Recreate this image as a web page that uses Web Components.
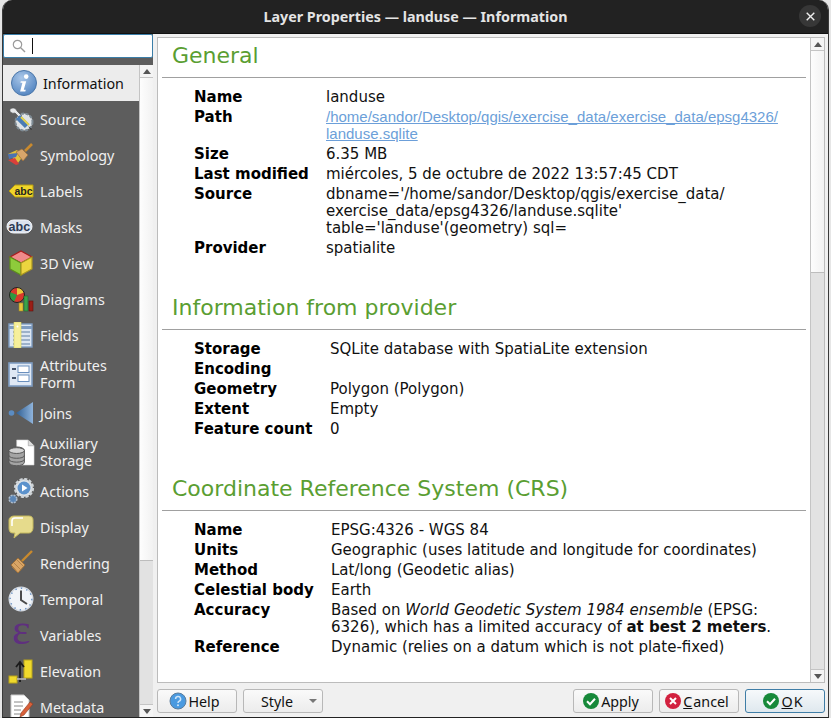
<!DOCTYPE html>
<html><head><meta charset="utf-8"><style>
html,body{margin:0;padding:0;height:718px;overflow:hidden;background:#e6e6e6}
</style></head><body>
<qgis-dialog>
  <title-bar slot="title">Layer Properties — landuse — Information</title-bar>
  <search-box slot="search"></search-box>
  <nav-list slot="nav">
    <nav-item selected><svg slot="icon" width="28" height="28" viewBox="0 0 28 28"><defs><radialGradient id="ib" cx=".4" cy=".3" r=".8"><stop offset="0" stop-color="#a9c6e8"/><stop offset="1" stop-color="#4b7fbd"/></radialGradient></defs><circle cx="14" cy="14" r="12.5" fill="url(#ib)" stroke="#4a76a8"/><circle cx="16.2" cy="7.6" r="2.3" fill="#fff"/><path d="M10.8 12.2h5.4l-2.4 8.6h2l-.5 1.6h-5.2l2.3-8.6h-2z" fill="#fff"/></svg>Information</nav-item>
    <nav-item><svg slot="icon" width="26" height="26" viewBox="0 0 26 26"><circle cx="16" cy="16" r="8.5" fill="#dfe3e6" stroke="#7d8a93" stroke-width="2" stroke-dasharray="3 1.6"/><path d="M2 3c3-2 6-1 7 2l5 5-2 2-5-5C4 8 1 6 2 3z" fill="#e6e8ea" stroke="#555" stroke-width=".7"/><path d="M10 11l9 9" stroke="#4a7cb5" stroke-width="6"/><path d="M13 11l8 8" stroke="#e7d44d" stroke-width="2"/><path d="M20 20l4 3-1 1z" fill="#333"/></svg>Source</nav-item>
    <nav-item><svg slot="icon" width="26" height="26" viewBox="0 0 26 26"><path d="M0 12l9-4 6 6-5 7z" fill="#e2c13a"/><path d="M0 12l10-1-2 4-7 2z" fill="#4c72b0"/><path d="M0 18l7-2 4 6-3 1z" fill="#d9403a"/><path d="M8 10l6-3 6 6-5 6z" fill="#d8a66b" stroke="#9a6d3a" stroke-width=".7"/><path d="M17 9l7-7" stroke="#c98a2e" stroke-width="2.6"/></svg>Symbology</nav-item>
    <nav-item><svg slot="icon" width="26" height="26" viewBox="0 0 26 26"><path d="M1 13l6-6h18v12H7z" fill="#f1d52a" stroke="#b59c12"/><text x="6.5" y="17.2" font-family="Liberation Sans" font-weight="700" font-size="10.5" fill="#222">abc</text></svg>Labels</nav-item>
    <nav-item><svg slot="icon" width="28" height="26" viewBox="0 0 28 26" style="margin-left:-2px"><rect x="1" y="6" width="25" height="13" rx="6.5" fill="#dce3ef" stroke="#f4f6fa"/><text x="2.6" y="17" font-family="Liberation Sans" font-weight="700" font-size="12.5" fill="#2d3a55">abc</text></svg>Masks</nav-item>
    <nav-item><svg slot="icon" width="26" height="26" viewBox="0 0 26 26"><path d="M13 1l11 6-11 6L2 7z" fill="#f08a8a" stroke="#a81c1c" stroke-width="1.2"/><path d="M2 7l11 6v12L2 19z" fill="#8ecb3b" stroke="#5d8f1b" stroke-width="1.2"/><path d="M24 7L13 13v12l11-6z" fill="#ecd53f" stroke="#a99521" stroke-width="1.2"/></svg>3D View</nav-item>
    <nav-item><svg slot="icon" width="26" height="26" viewBox="0 0 26 26"><circle cx="9" cy="9" r="7.5" fill="#d9392c"/><path d="M9 9V1.5a7.5 7.5 0 0 1 7 5z" fill="#e9c63a"/><path d="M9 9L2 6a7.5 7.5 0 0 0 4 10z" fill="#2f9a41"/><circle cx="9" cy="9" r="7.5" fill="none" stroke="#222"/><rect x="11" y="17" width="4" height="8" fill="#e9c63a" stroke="#9a8420" stroke-width=".6"/><rect x="16" y="10" width="4" height="15" fill="#3aa24a" stroke="#226a30" stroke-width=".6"/><rect x="21" y="15" width="4" height="10" fill="#9a1e16" stroke="#5e120d" stroke-width=".6"/></svg>Diagrams</nav-item>
    <nav-item><svg slot="icon" width="26" height="26" viewBox="0 0 26 26"><rect x="1" y="2" width="23" height="23" fill="#dce6f2" stroke="#7f9dc2" stroke-width="1.4"/><path d="M1 5.5h23" stroke="#7f9dc2" stroke-width="3"/><path d="M5 10h17M5 14h17M5 18h17M5 22h17" stroke="#87a0bd" stroke-width="1.4"/><rect x="6" y="0" width="7" height="26" fill="#f6ef9b" stroke="#dcd25a" stroke-width=".6"/><circle cx="9.5" cy="4.5" r="1" fill="#fff"/></svg>Fields</nav-item>
    <nav-item two><svg slot="icon" width="26" height="26" viewBox="0 0 26 26"><rect x="1" y="2" width="23" height="23" fill="#dfe8f4" stroke="#7f9dc2" stroke-width="1.6"/><path d="M4 8h4M4 17h4" stroke="#44536b" stroke-width="1.8"/><rect x="10" y="5" width="11" height="6.5" fill="#fff" stroke="#6a8fbd"/><rect x="10" y="14" width="11" height="6.5" fill="#fff" stroke="#6a8fbd"/></svg>Attributes<br>Form</nav-item>
    <nav-item><svg slot="icon" width="26" height="26" viewBox="0 0 26 26"><defs><linearGradient id="jg"><stop offset="0" stop-color="#2f5f94"/><stop offset="1" stop-color="#8fb4dc"/></linearGradient></defs><circle cx="3.5" cy="13" r="2.8" fill="#5b8cc2"/><path d="M8 13L25 2v22z" fill="url(#jg)"/></svg>Joins</nav-item>
    <nav-item two><svg slot="icon" width="27" height="27" viewBox="0 0 28 28"><path d="M9 1h12l6 6v20H9z" fill="#fff" stroke="#ccc" stroke-width=".6"/><path d="M21 1v6h6" fill="#ddd" stroke="#999" stroke-width=".6"/><path d="M1 12c0-5 16-5 16 0v12c0 5-16 5-16 0z" fill="#a4a4a4" stroke="#555"/><ellipse cx="9" cy="12" rx="8" ry="3" fill="#d2d2d2" stroke="#555"/><path d="M1 17c0 4 16 4 16 0M1 21c0 4 16 4 16 0" fill="none" stroke="#555"/></svg>Auxiliary<br>Storage</nav-item>
    <nav-item><svg slot="icon" width="26" height="26" viewBox="0 0 26 26"><circle cx="16" cy="10" r="8.8" fill="#e0e4e8" stroke="#cfd4d8" stroke-width="2.6" stroke-dasharray="3 1.6"/><circle cx="16" cy="10" r="6.5" fill="#5c92cc"/><path d="M14 6.5l5.5 3.5-5.5 3.5z" fill="#fff"/><circle cx="5" cy="21" r="3.8" fill="#5b86b6" stroke="#aebccd" stroke-width="1.6" stroke-dasharray="2 1"/></svg>Actions</nav-item>
    <nav-item><svg slot="icon" width="26" height="26" viewBox="0 0 26 26"><path d="M6 2h15c3 0 4 2 4 4v8c0 3-2 5-4 5H12l-6 5 1-5H5c-3 0-4-2-4-5V6c0-2 2-4 5-4z" fill="#e6db8c" stroke="#c5b95f"/><path d="M4 12V7c0-2 1-3 3-3h8" fill="none" stroke="#fff" stroke-width="1.6"/></svg>Display</nav-item>
    <nav-item><svg slot="icon" width="26" height="26" viewBox="0 0 26 26"><path d="M3 15l7-7 7 7-7 8z" fill="#d9a566" stroke="#9d6f38"/><path d="M6 13l7 7M9 10l7 7M4 17l5 5" stroke="#a97a42" stroke-width=".8"/><path d="M14 11l10-10" stroke="#c98a2e" stroke-width="2.4"/></svg>Rendering</nav-item>
    <nav-item><svg slot="icon" width="26" height="26" viewBox="0 0 26 26"><circle cx="13" cy="13" r="11.8" fill="#f1f4f8" stroke="#d5dbe3" stroke-width="1.4"/><circle cx="13" cy="13" r="10.8" fill="none" stroke="#6b93c5" stroke-width="1.4" stroke-dasharray="1.4 4.2"/><path d="M13 4.5V14l6 4" fill="none" stroke="#4b4b4b" stroke-width="2"/></svg>Temporal</nav-item>
    <nav-item><span slot="icon" style="display:block;width:26px;height:26px;padding-left:4px;box-sizing:border-box;font:44px/16px 'Liberation Serif',serif;color:#5f2f7f">ε</span>Variables</nav-item>
    <nav-item><svg slot="icon" width="26" height="26" viewBox="0 0 26 26"><rect x="1" y="18" width="8" height="7" fill="#efd92c" stroke="#b9a41a"/><rect x="16" y="2" width="8" height="18" fill="#efd92c" stroke="#b9a41a"/><path d="M12 24V5M8 9l4-5 4 5" fill="none" stroke="#1b1b1b" stroke-width="1.8"/><path d="M9 21h9" stroke="#b9b9b9" stroke-width="1.6"/></svg>Elevation</nav-item>
    <nav-item><svg slot="icon" width="26" height="26" viewBox="0 0 26 26"><path d="M3 1h13l5 5v21H3z" fill="#fff" stroke="#ccc"/><path d="M6 8h9M6 12h9M6 16h7M6 20h9" stroke="#888"/><path d="M13 19l9-11 3 2-9 11-4 2z" fill="#d9603a" stroke="#8d3a1f" stroke-width=".6"/></svg>Metadata</nav-item>
  </nav-list>

  <info-section heading="General">
    <info-table first-col="132">
      <b>Name</b><span>landuse</span>
      <b>Path</b><a-link>/home/sandor/Desktop/qgis/exercise_data/exercise_data/epsg4326/<br>landuse.sqlite</a-link>
      <b>Size</b><span>6.35 MB</span>
      <b>Last modified</b><span>miércoles, 5 de octubre de 2022 13:57:45 CDT</span>
      <b>Source</b><span>dbname='/home/sandor/Desktop/qgis/exercise_data/<br>exercise_data/epsg4326/landuse.sqlite'<br>table='landuse'(geometry) sql=</span>
      <b>Provider</b><span>spatialite</span>
    </info-table>
  </info-section>
  <info-section heading="Information from provider">
    <info-table first-col="136">
      <b>Storage</b><span>SQLite database with SpatiaLite extension</span>
      <b>Encoding</b><span></span>
      <b>Geometry</b><span>Polygon (Polygon)</span>
      <b>Extent</b><span>Empty</span>
      <b>Feature count</b><span>0</span>
    </info-table>
  </info-section>
  <info-section heading="Coordinate Reference System (CRS)">
    <info-table first-col="137">
      <b>Name</b><span>EPSG:4326 - WGS 84</span>
      <b>Units</b><span>Geographic (uses latitude and longitude for coordinates)</span>
      <b>Method</b><span>Lat/long (Geodetic alias)</span>
      <b>Celestial body</b><span>Earth</span>
      <b>Accuracy</b><span>Based on <i>World Geodetic System 1984 ensemble</i> (EPSG:<br>6326), which has a limited accuracy of <b>at best 2 meters</b>.</span>
      <b>Reference</b><span>Dynamic (relies on a datum which is not plate-fixed)</span>
    </info-table>
  </info-section>

  <dlg-button slot="left"><svg slot="icon" width="18" height="18" viewBox="0 0 18 18"><circle cx="9" cy="9" r="8" fill="#4a9ae0" stroke="#5a7c9c"/><path d="M6.6 7a2.5 2.5 0 1 1 3.6 2.2c-.9.5-1.2 1-1.2 1.9" fill="none" stroke="#cfe6fa" stroke-width="1.5"/><circle cx="9" cy="13.3" r="1" fill="#cfe6fa"/></svg>Help</dlg-button>
  <dlg-button slot="left" menu>Style</dlg-button>
  <dlg-button slot="right"><svg slot="icon" width="18" height="18" viewBox="0 0 18 18"><circle cx="9" cy="9" r="8" fill="#17893a"/><path d="M5 9.2l3 3 5-5.4" fill="none" stroke="#fff" stroke-width="2"/></svg>Apply</dlg-button>
  <dlg-button slot="right"><svg slot="icon" width="18" height="18" viewBox="0 0 18 18"><circle cx="9" cy="9" r="8" fill="#d2213f"/><path d="M6 6l6 6M12 6l-6 6" stroke="#fff" stroke-width="2"/></svg><u>C</u>ancel</dlg-button>
  <dlg-button slot="right" primary><svg slot="icon" width="18" height="18" viewBox="0 0 18 18"><circle cx="9" cy="9" r="8" fill="#17893a"/><path d="M5 9.2l3 3 5-5.4" fill="none" stroke="#fff" stroke-width="2"/></svg><u>O</u>K</dlg-button>
</qgis-dialog>

<script>
function def(name, css, html, extra){
  class C extends HTMLElement{
    constructor(){super();const r=this.attachShadow({mode:'open'});r.innerHTML='<style>'+css+'</style>'+html;}
    connectedCallback(){if(extra)extra(this);}
  }
  customElements.define(name,C);
}
const UI='"Noto Sans","Open Sans",sans-serif';
def('qgis-dialog',`
:host{display:flex;flex-direction:column;width:825px;height:717px;margin-left:2px;background:#f0f0f0;border-left:1px solid #3a3a3a;border-right:1px solid #3a3a3a;box-sizing:content-box;border-bottom:1px solid #222;font-family:${UI};overflow:hidden;border-radius:10px 10px 0 0}
.body{flex:1;display:flex;min-height:0}
.left{width:150px;display:flex;flex-direction:column;min-height:0}
.split{width:4px}
.right{width:668px;display:flex;flex-direction:column;padding-top:3px;box-sizing:border-box}
.frame{height:646px;box-sizing:border-box;border:1px solid #bcbcbc;display:flex;background:#fff}
.scroll{flex:1;min-width:0;overflow:hidden;padding:4px 4px 0 4px}
.btns{display:flex;justify-content:space-between;margin-top:6px}
.grp{display:flex;gap:6px}
`,`
<slot name="title"></slot>
<div class="body">
  <div class="left"><slot name="search"></slot><slot name="nav"></slot></div>
  <div class="split"></div>
  <div class="right">
    <div class="frame"><div class="scroll"><slot></slot></div><v-scroll thumb="222" w="14"></v-scroll></div>
    <div class="btns"><div class="grp"><slot name="left"></slot></div><div class="grp"><slot name="right"></slot></div></div>
  </div>
</div>`);
def('title-bar',`
:host{display:flex;align-items:center;justify-content:center;position:relative;height:33px;flex:none;background:#222;color:#e4e4e4;font:700 14.3px ${UI};border-bottom:1px solid #111;box-sizing:content-box}
.x{position:absolute;right:7px;top:5px;width:22px;height:22px;border-radius:50%;background:#373737;display:flex;align-items:center;justify-content:center}
`,`<span class="t"><slot></slot></span><span class="x"><svg width="9" height="9" viewBox="0 0 9 9"><path d="M.7.7l7.6 7.6M8.3.7L.7 8.3" stroke="#eee" stroke-width="1.4"/></svg></span>`);
def('search-box',`
:host{display:block;flex:none;background:#5d5d5d;height:31px;box-sizing:border-box}
.i{height:24px;background:#fff;border:1px solid #3b7ea8;border-radius:2px;box-sizing:border-box;display:flex;align-items:center;padding-left:8px;gap:6px}
.c{width:1px;height:16px;background:#111}
`,`<div class="i"><svg width="14" height="14" viewBox="0 0 14 14"><circle cx="5.5" cy="5.5" r="4.2" fill="none" stroke="#9a9a9a" stroke-width="1.2"/><path d="M8.7 8.7l4.3 4.3" stroke="#9a9a9a" stroke-width="1.4"/></svg><span class="c"></span></div>`);
def('nav-list',`
:host{display:flex;flex:1;min-height:0;width:150px}
.l{width:136px;background:#5d5d5d;overflow:hidden;display:flex;flex-direction:column}
`,`<div class="l"><slot></slot></div><v-scroll thumb="483" w="14"></v-scroll>`);
def('nav-item',`
:host{display:flex;align-items:center;flex:none;min-height:36px;box-sizing:border-box;padding:3.5px 0 3.5px 5px;color:#f0f0f0;font:14.3px/17px ${UI}}
:host([selected]){background:#ececec;color:#111;padding-left:7px}
.ic{width:32px;display:flex;align-items:center;flex:none}
:host([selected]) .ic{width:33px}
.tx{padding-top:1px}
:host([two]) .tx{padding-top:0;padding-bottom:1px}
`,`<span class="ic"><slot name="icon"></slot></span><span class="tx"><slot></slot></span>`);
def('v-scroll',`
:host{display:flex;flex-direction:column;flex:none;width:14px;background:#e2e2e2;box-sizing:border-box;border-left:1px solid #c4c4c4}
.b{height:13px;flex:none;background:#f4f4f4;display:flex;align-items:center;justify-content:center;box-sizing:border-box}
.b.u{border-bottom:1px solid #c4c4c4}.b.d{border-top:1px solid #c4c4c4;margin-top:auto}
.t{background:linear-gradient(90deg,#fdfdfd,#f2f2f2);border-bottom:1px solid #bdbdbd;box-sizing:border-box;flex:none}
`,`<div class="b u"><svg width="8" height="5"><path d="M0 5L4 0l4 5z" fill="#555"/></svg></div><div class="t"></div><div class="b d"><svg width="8" height="5"><path d="M0 0l4 5 4-5z" fill="#555"/></svg></div>`,
el=>{el.shadowRoot.querySelector('.t').style.height=el.getAttribute('thumb')+'px'});
def('info-section',`
:host{display:block;font-family:"DejaVu Sans",sans-serif;margin-bottom:37px}
h2{margin:0;font:400 22px/26px "DejaVu Sans",sans-serif;color:#5a9e32;padding:1px 0 0 10px;margin-bottom:8px}
hr{border:0;border-top:1px solid #a0a0a0;margin:0 0 11px;width:644px}
`,`<h2></h2><hr><slot></slot>`,el=>{el.shadowRoot.querySelector('h2').textContent=el.getAttribute('heading')});
def('info-table',`
:host{display:block;padding-left:32px}
.g{display:grid;row-gap:3px;font:15px/17px "DejaVu Sans",sans-serif;color:#111}
::slotted(b){color:#000;font-weight:700}
`,`<div class="g"><slot></slot></div>`,el=>{el.shadowRoot.querySelector('.g').style.gridTemplateColumns=el.getAttribute('first-col')+'px 1fr'});
def('a-link',`
:host{display:block;font:15px/17px "Liberation Sans",sans-serif;color:#6c9fd9;text-decoration:underline;margin:-1px 0 1px}
`,`<slot></slot>`);
def('dlg-button',`
:host{display:flex;align-items:center;justify-content:center;gap:1px;width:80px;height:24px;box-sizing:border-box;border:1px solid #b8b8b8;border-radius:3px;padding-right:5px;background:linear-gradient(#fafafa,#ececec);color:#111;font:14.3px ${UI};position:relative}
:host([primary]){border-color:#3f7da6;background:linear-gradient(#f6f9fb,#dfe8ee)}
:host([menu]){padding-right:12px}
:host([menu])::after{content:"";position:absolute;right:5px;top:9px;border:4px solid transparent;border-top:4px solid #777;border-bottom:0}
`,`<slot name="icon"></slot><slot></slot>`);
</script>
</body></html>
